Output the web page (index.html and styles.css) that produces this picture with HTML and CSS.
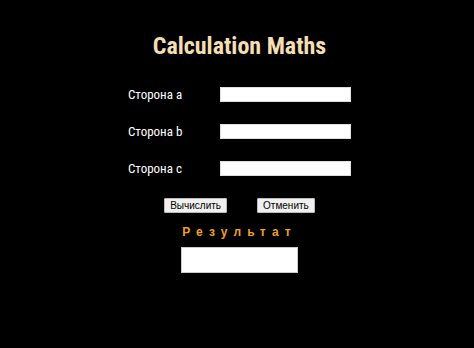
FILE: index.html
```html
<!DOCTYPE html>
<html lang="ru">
<head>
<meta charset="utf-8">
<title>Calculation Maths</title>
<link rel="stylesheet" href="styles.css">
</head>
<body>
<main class="page">
  <h1 class="title">Calculation Maths</h1>
  <form class="form">
    <div class="row">
      <label class="label" for="a">Сторона a</label>
      <input class="field" id="a" type="text">
    </div>
    <div class="row">
      <label class="label" for="b">Сторона b</label>
      <input class="field" id="b" type="text">
    </div>
    <div class="row">
      <label class="label" for="c">Сторона c</label>
      <input class="field" id="c" type="text">
    </div>
    <div class="actions">
      <button class="btn" type="button">Вычислить</button>
      <button class="btn" type="reset">Отменить</button>
    </div>
    <div class="result-title">Результат</div>
    <div class="result"></div>
  </form>
</main>
</body>
</html>
```
FILE: styles.css
```css
html, body {
  margin: 0;
  padding: 0;
  background: #000;
}
body {
  width: 474px;
  height: 348px;
  overflow: hidden;
}
.page {
  display: flex;
  flex-direction: column;
  align-items: center;
  padding-left: 5px;
  padding-top: 30px;
}
.title {
  margin: 0;
  font-family: "Roboto Condensed", "Liberation Sans Narrow", Roboto, sans-serif;
  font-weight: 700;
  font-size: 24px;
  line-height: 32px;
  color: #f5deb3;
}
.form {
  display: flex;
  flex-direction: column;
  align-items: center;
  margin-top: 25px;
}
.row {
  display: grid;
  grid-template-columns: 92px 131px;
  align-items: center;
  height: 15px;
  margin-bottom: 22px;
}
.label {
  font-family: "Roboto Condensed", "Liberation Sans Narrow", Roboto, sans-serif;
  font-size: 13px;
  color: #fff;
}
.field {
  box-sizing: border-box;
  width: 131px;
  height: 15px;
  margin: 0;
  padding: 0;
  border: 1px solid #ddd;
  background: #fff;
}
.actions {
  display: flex;
  gap: 30px;
}
.btn {
  box-sizing: border-box;
  height: 15px;
  padding: 0 5px;
  margin: 0;
  font-family: "Liberation Sans", Arial, sans-serif;
  font-size: 10px;
  line-height: 13px;
  color: #000;
  background: #f0f0f0;
  border: 1px solid #bbb;
  border-radius: 1px;
}
.result-title {
  margin-top: 12px;
  font-family: "Liberation Sans", Arial, sans-serif;
  font-weight: 700;
  font-size: 12px;
  letter-spacing: 6.2px;
  color: #f0a020;
}
.result {
  box-sizing: border-box;
  width: 117px;
  height: 26px;
  margin-top: 8px;
  background: #fff;
  border: 1px solid #ccc;
}
```
